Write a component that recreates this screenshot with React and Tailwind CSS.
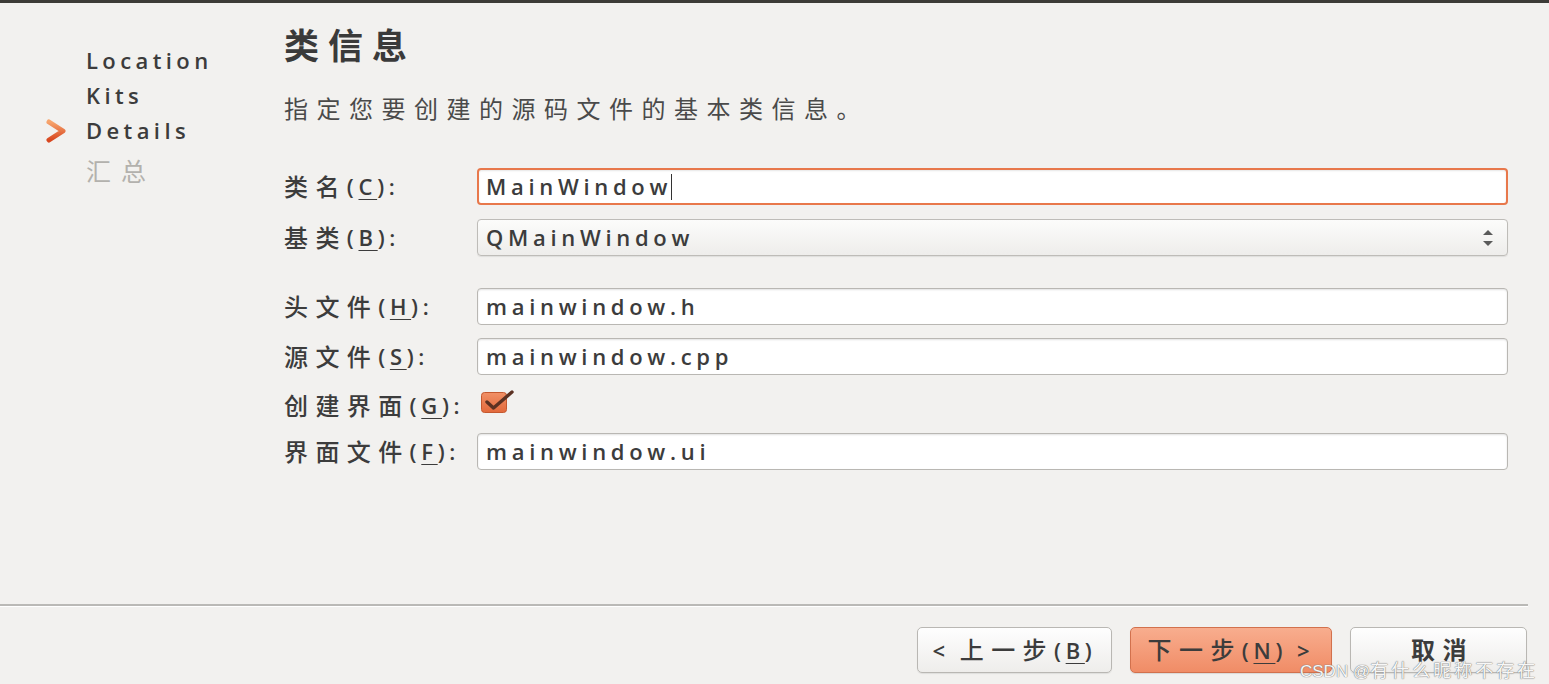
import React from "react";

const Z = ({ children, className = "" }) => (
  <span className={"text-[24px] tracking-[7.4px] " + className}>{children}</span>
);

function Label({ cjk, letter }) {
  return (
    <div className="w-[193px] shrink-0 flex items-center whitespace-nowrap">
      <Z className="font-medium">{cjk}</Z>
      <span>
        (<span className="underline decoration-1 underline-offset-[4px]">{letter}</span>):
      </span>
    </div>
  );
}

function TextField({ value, active = false, caret = false }) {
  return (
    <div
      className={
        active
          ? "flex-1 h-full rounded-[4px] border-2 border-[#e8784b] bg-white pl-[7px] flex items-center shadow-[inset_0_1px_2px_rgba(0,0,0,0.10)]"
          : "flex-1 h-full rounded-[4px] border border-[#b9b7b3] bg-white pl-[8px] flex items-center shadow-[inset_0_1px_2px_rgba(0,0,0,0.12)]"
      }
    >
      <span>{value}</span>
      {caret && <span className="ml-[-1px] w-px h-[26px] bg-[#333]" />}
    </div>
  );
}

function Chevron() {
  return (
    <svg width="24" height="26" viewBox="0 0 24 26">
      <defs>
        <linearGradient id="chev" x1="0" y1="0" x2="0" y2="1">
          <stop offset="0" stopColor="#f7a46c" />
          <stop offset="1" stopColor="#d8471f" />
        </linearGradient>
      </defs>
      <path
        d="M5 4 L19 13 L5 22"
        fill="none"
        stroke="url(#chev)"
        strokeWidth="5"
        strokeLinecap="round"
        strokeLinejoin="round"
      />
    </svg>
  );
}

function CheckBox() {
  return (
    <svg width="36" height="26" viewBox="0 0 36 26" className="ml-[3px] mt-[2px]">
      <defs>
        <linearGradient id="cb" x1="0" y1="0" x2="0" y2="1">
          <stop offset="0" stopColor="#f19066" />
          <stop offset="1" stopColor="#e2693b" />
        </linearGradient>
      </defs>
      <rect x="1.5" y="3.5" width="25" height="20" rx="3" fill="url(#cb)" stroke="#c4582f" />
      <path
        d="M7 13 L13.5 19 L32 3"
        fill="none"
        stroke="#5b3122"
        strokeWidth="3.4"
        strokeLinecap="round"
        strokeLinejoin="round"
      />
    </svg>
  );
}

export default function App() {
  return (
    <div className="relative w-[1549px] h-[684px] overflow-hidden bg-[#f2f1ef] font-['Open_Sans','Noto_Sans_CJK_SC',sans-serif] font-semibold text-[22px] tracking-[4.7px] text-[#3c3c3c] flex flex-col">
      <div className="h-[3px] shrink-0 bg-[#3c3b37]" />
      <div className="flex h-[601px] shrink-0">
        {/* Sidebar */}
        <aside className="w-[284px] shrink-0 pt-[40px] pl-[44px] flex flex-col">
          <div className="h-[35px] flex items-center">
            <span className="w-[42px]" />
            <span className="tracking-[4.4px]">Location</span>
          </div>
          <div className="h-[35px] flex items-center">
            <span className="w-[42px]" />
            <span className="tracking-[4.4px]">Kits</span>
          </div>
          <div className="h-[35px] flex items-center">
            <span className="w-[42px] flex items-center">
              <Chevron />
            </span>
            <span className="tracking-[4.4px]">Details</span>
          </div>
          <div className="h-[35px] mt-[6px] flex items-center">
            <span className="w-[42px]" />
            <span className="text-[25px] tracking-[10px] text-[#b3b1ad] font-normal">汇总</span>
          </div>
        </aside>

        {/* Content */}
        <main className="flex-1 pr-[41px] flex flex-col">
          <div className="mt-[23px] h-[40px] leading-[40px] font-bold text-[35px] tracking-[9px] text-[#3a3a3a]">
            类信息
          </div>
          <div className="mt-[27px] h-[32px] leading-[32px]">
            <span className="text-[24px] tracking-[8.5px] text-[#4a4a4a] font-normal">
              指定您要创建的源码文件的基本类信息。
            </span>
          </div>

          <div className="mt-[43px] h-[37px] flex items-center">
            <Label cjk="类名" letter="C" />
            <TextField value="MainWindow" active caret />
          </div>

          <div className="mt-[14px] h-[37px] flex items-center">
            <Label cjk="基类" letter="B" />
            <div className="relative flex-1 h-full rounded-[4px] border border-[#bebcb8] bg-linear-to-b from-[#fcfcfb] to-[#eeedeb] pl-[8px] flex items-center shadow-[0_1px_1px_rgba(0,0,0,0.08)]">
              <span>QMainWindow</span>
              <svg
                width="12"
                height="18"
                viewBox="0 0 12 18"
                className="absolute right-[13px] top-[9px]"
              >
                <path d="M1 6 L11 6 L6 1 Z" fill="#5a5a5a" />
                <path d="M1 12 L11 12 L6 17 Z" fill="#5a5a5a" />
              </svg>
            </div>
          </div>

          <div className="mt-[32px] h-[37px] flex items-center">
            <Label cjk="头文件" letter="H" />
            <TextField value="mainwindow.h" />
          </div>

          <div className="mt-[13px] h-[37px] flex items-center">
            <Label cjk="源文件" letter="S" />
            <TextField value="mainwindow.cpp" />
          </div>

          <div className="mt-[12px] h-[37px] flex items-center">
            <Label cjk="创建界面" letter="G" />
            <div className="self-start">
              <CheckBox />
            </div>
          </div>

          <div className="mt-[9px] h-[37px] flex items-center">
            <Label cjk="界面文件" letter="F" />
            <TextField value="mainwindow.ui" />
          </div>
        </main>
      </div>

      {/* Separator */}
      <div className="w-[1528px] h-[3px] shrink-0 border-t-2 border-[#bab9b6] bg-white" />

      {/* Buttons */}
      <div className="pt-[20px] pr-[22px] flex justify-end">
        <div className="flex gap-[18px]">
          <button className="w-[195px] h-[46px] rounded-[5px] border border-[#b9b7b3] bg-linear-to-b from-[#fefefe] to-[#eeedeb] shadow-[0_1px_1px_rgba(0,0,0,0.08)] flex items-center justify-center text-[#3c3c3c]">
            <span className="mr-[10px]">&lt;</span>
            <Z className="font-medium">上一步</Z>
            <span>
              (<span className="underline decoration-1 underline-offset-[4px]">B</span>)
            </span>
          </button>
          <button className="w-[202px] h-[46px] rounded-[5px] border border-[#d2714d] bg-linear-to-b from-[#f8ad8e] to-[#f08c66] shadow-[0_1px_1px_rgba(0,0,0,0.10)] flex items-center justify-center text-[#3c3c3c]">
            <Z className="font-medium">下一步</Z>
            <span>
              (<span className="underline decoration-1 underline-offset-[4px]">N</span>)
            </span>
            <span className="ml-[10px]">&gt;</span>
          </button>
          <button className="w-[177px] h-[46px] rounded-[5px] border border-[#b9b7b3] bg-linear-to-b from-[#fefefe] to-[#eeedeb] shadow-[0_1px_1px_rgba(0,0,0,0.08)] flex items-center justify-center pl-[8px] text-[#3c3c3c]">
            <Z className="font-bold">取消</Z>
          </button>
        </div>
      </div>

      {/* Watermark */}
      <div className="absolute left-[1300px] top-[652px] whitespace-nowrap font-normal text-[#f7f7f7] tracking-normal [text-shadow:0_0_1px_#777,0_0_1px_#777]">
        <span className="font-['Liberation_Sans',sans-serif] text-[17px]">CSDN @</span>
        <span className="text-[18px] tracking-[3px]">有什么昵称不存在</span>
      </div>
    </div>
  );
}
